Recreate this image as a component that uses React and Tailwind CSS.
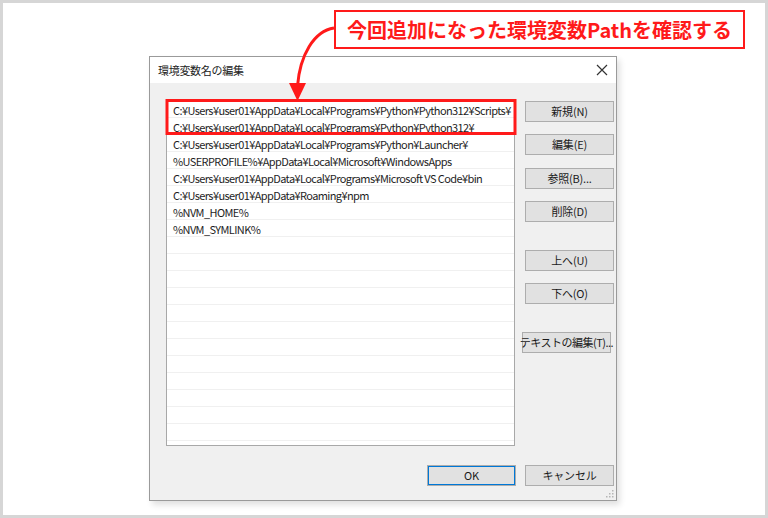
import React from "react";

const font = { fontFamily: '"Noto Sans CJK JP", "Noto Sans", sans-serif' };

const rows = [
  "C:¥Users¥user01¥AppData¥Local¥Programs¥Python¥Python312¥Scripts¥",
  "C:¥Users¥user01¥AppData¥Local¥Programs¥Python¥Python312¥",
  "C:¥Users¥user01¥AppData¥Local¥Programs¥Python¥Launcher¥",
  "%USERPROFILE%¥AppData¥Local¥Microsoft¥WindowsApps",
  "C:¥Users¥user01¥AppData¥Local¥Programs¥Microsoft VS Code¥bin",
  "C:¥Users¥user01¥AppData¥Roaming¥npm",
  "%NVM_HOME%",
  "%NVM_SYMLINK%",
];

function Btn({ children, className = "" }) {
  return (
    <div
      className={
        "flex h-[21px] w-[89px] shrink-0 items-center justify-center whitespace-nowrap border border-[#adadad] bg-[#e1e1e1] text-[11px] leading-none tracking-[-0.2px] text-[#1a1a1a] " +
        className
      }
    >
      {children}
    </div>
  );
}

export default function App() {
  const all = [...rows, ...Array(13).fill("")];
  return (
    <div
      style={font}
      className="relative flex h-[518px] w-[768px] flex-col overflow-hidden border-[3px] border-[#d6d6d6] bg-white"
    >
      {/* callout */}
      <div className="ml-[331px] mt-[7px] flex h-[39px] w-[411px] items-center justify-center border-2 border-[#ff1a1a] bg-white">
        <span className="text-[20px] font-bold leading-none text-[#ff1a1a]">
          今回追加になった環境変数Pathを確認する
        </span>
      </div>

      {/* dialog */}
      <div className="ml-[146px] mt-[7px] flex h-[445px] w-[468px] flex-col border border-[#9a9a9a] bg-[#f0f0f0] shadow-[3px_4px_6px_rgba(0,0,0,0.12)]">
        <div className="flex h-[26px] shrink-0 items-center justify-between bg-white pl-[8px] pr-[8px]">
          <span className="text-[11px] leading-none tracking-[-0.3px] text-[#222]">環境変数名の編集</span>
          <svg width="12" height="12" viewBox="0 0 12 12">
            <path d="M1 1 L11 11 M11 1 L1 11" stroke="#333" strokeWidth="1.2" fill="none" />
          </svg>
        </div>
        <div className="flex flex-1 flex-col px-[16px] pt-[17px]">
          <div className="flex gap-[10px]">
            <div className="h-[346px] w-[349px] shrink-0 overflow-hidden border border-[#a8a8a8] bg-white">
              {all.map((r, i) => (
                <div
                  key={i}
                  className="flex h-[17px] items-center border-b border-[#f0f0f0] pl-[6px] pt-[2px] text-[11px] leading-none tracking-[-0.6px] text-[#1e1e1e] whitespace-nowrap"
                >
                  {r}
                </div>
              ))}
            </div>
            <div className="flex shrink-0 flex-col pt-[1px]">
              <Btn>新規(N)</Btn>
              <Btn className="mt-[12px]">編集(E)</Btn>
              <Btn className="mt-[13px]">参照(B)...</Btn>
              <Btn className="mt-[12px]">削除(D)</Btn>
              <Btn className="mt-[28px]">上へ(U)</Btn>
              <Btn className="mt-[12px]">下へ(O)</Btn>
              <Btn className="-ml-[3px] mt-[28px] tracking-[-0.5px]">テキストの編集(T)...</Btn>
            </div>
          </div>
          <div className="mt-[19px] flex gap-[9px] pl-[261px]">
            <Btn className="border-[#0078d7] shadow-[inset_0_0_0_1px_#0078d7]">OK</Btn>
            <Btn>キャンセル</Btn>
          </div>
          <div className="flex flex-1 items-end justify-end pb-[2px]">
            <svg width="8" height="8" viewBox="0 0 8 8" className="-mr-[14px]">
              <rect x="6" y="0" width="1.5" height="1.5" fill="#b5b5b5" />
              <rect x="3" y="3" width="1.5" height="1.5" fill="#b5b5b5" />
              <rect x="6" y="3" width="1.5" height="1.5" fill="#b5b5b5" />
              <rect x="0" y="6" width="1.5" height="1.5" fill="#b5b5b5" />
              <rect x="3" y="6" width="1.5" height="1.5" fill="#b5b5b5" />
              <rect x="6" y="6" width="1.5" height="1.5" fill="#b5b5b5" />
            </svg>
          </div>
        </div>
      </div>

      {/* annotation overlay */}
      <svg
        className="pointer-events-none absolute left-[-3px] top-[-3px]"
        width="768"
        height="518"
        viewBox="0 0 768 518"
      >
        <path d="M334 28 C314 31 300 55 297.5 86" stroke="#ff1a1a" strokeWidth="3" fill="none" />
        <polygon points="289,83 306,83 297.5,101" fill="#ff1a1a" />
        <rect x="167" y="100.5" width="348" height="33" stroke="#ff1a1a" strokeWidth="3" fill="none" />
      </svg>
    </div>
  );
}
